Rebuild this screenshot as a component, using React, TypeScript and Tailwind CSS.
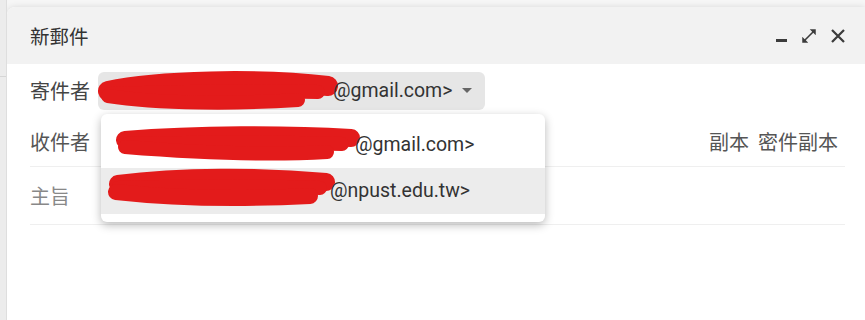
import React from 'react'

const CJK = '"Noto Sans CJK TC", "Noto Sans", sans-serif'
const LATIN = 'Roboto, "Noto Sans CJK TC", sans-serif'

// red brush-stroke used to hide the names
function Scribble({ w, h, strokes }: { w: number; h: number; strokes: { d: string; sw: number }[] }) {
  return (
    <svg width={w} height={h} viewBox={`0 0 ${w} ${h}`} className="shrink-0 overflow-visible">
      {strokes.map((s, i) => (
        <path key={i} d={s.d} stroke="#e31b1b" strokeWidth={s.sw} strokeLinecap="round" strokeLinejoin="round" fill="none" />
      ))}
    </svg>
  )
}

function HeaderIcons() {
  return (
    <div className="flex items-center gap-[11px] text-[#3c3c3c]">
      <svg width="14" height="16" viewBox="0 0 14 16">
        <rect x="1" y="11" width="11" height="3" fill="currentColor" />
      </svg>
      <svg width="18" height="18" viewBox="0 0 24 24">
        <path d="M21 11V3h-8l3.29 3.29-10 10L3 13v8h8l-3.29-3.29 10-10z" fill="currentColor" />
      </svg>
      <svg width="18" height="18" viewBox="0 0 24 24">
        <path d="M4 4l16 16M20 4L4 20" stroke="currentColor" strokeWidth="3" />
      </svg>
    </div>
  )
}

export default function App() {
  return (
    <div className="w-[865px] h-[320px] bg-[#f6f6f6] flex overflow-hidden relative" style={{ fontFamily: CJK }}>
      {/* background app peeking on the left */}
      <div className="w-[7px] shrink-0 bg-[#ececec] border-r border-[#dedede] overflow-hidden relative">
        <div className="h-[77px] border-b border-[#d6d6d6]" />
      </div>

      {/* compose window */}
      <div className="flex-1 mt-[7px] bg-white rounded-tl-[8px] overflow-hidden shadow-[0_0_6px_rgba(0,0,0,0.12)] flex flex-col">
        <div className="h-[57px] shrink-0 bg-[#f2f2f2] pl-[23px] pr-[18px] flex items-center justify-between">
          <span className="text-[19.5px] text-[#333]">新郵件</span>
          <HeaderIcons />
        </div>

        <div className="pl-[23px] pr-[20px]">
          {/* from */}
          <div className="h-[54px] flex items-center">
            <span className="w-[68px] text-[20px] text-[#444]">寄件者</span>
            <button className="h-[38px] w-[387px] bg-[#e6e6e6] rounded-[6px] flex items-center pr-[13px] text-[19.5px] text-[#333]" style={{ fontFamily: LATIN }}>
              <Scribble
                w={235}
                h={38}
                strokes={[
                  { d: 'M10 19 C60 8 160 6 230 14', sw: 20 },
                  { d: 'M12 22 C70 20 150 18 220 20', sw: 14 },
                  { d: 'M10 24 C60 32 140 32 200 28', sw: 14 },
                ]}
              />
              <span>@gmail.com&gt;</span>
              <svg width="10" height="6" viewBox="0 0 10 6" className="ml-auto text-[#666]">
                <path d="M0 0h10L5 5z" fill="currentColor" />
              </svg>
            </button>
          </div>

          {/* to */}
          <div className="h-[49px] flex items-center justify-between border-b border-[#efefef]">
            <span className="text-[20px] text-[#555]">收件者</span>
            <span className="text-[20px] text-[#555] mr-[7px]">副本&nbsp;&nbsp;密件副本</span>
          </div>

          {/* subject */}
          <div className="h-[58px] flex items-center border-b border-[#efefef]">
            <span className="text-[20px] text-[#888]">主旨</span>
          </div>
        </div>
      </div>

      {/* sender dropdown menu */}
      <div
        className="absolute left-[101px] top-[114px] w-[444px] bg-white rounded-[6px] shadow-[0_3px_10px_rgba(0,0,0,0.28)] py-[8px] text-[19.5px] text-[#333]"
        style={{ fontFamily: LATIN }}
      >
        <div className="h-[46px] flex items-center pl-[16px]">
          <Scribble
            w={238}
            h={46}
            strokes={[
              { d: 'M8 18 C80 12 170 12 234 16', sw: 18 },
              { d: 'M10 22 C80 20 160 20 225 22', sw: 14 },
              { d: 'M8 25 C70 30 140 34 210 30', sw: 14 },
            ]}
          />
          <span>@gmail.com&gt;</span>
        </div>
        <div className="h-[46px] flex items-center pl-[9px] bg-[#ececec]">
          <Scribble
            w={220}
            h={46}
            strokes={[
              { d: 'M8 16 C70 8 150 8 216 14', sw: 18 },
              { d: 'M8 20 C70 18 150 18 210 20', sw: 14 },
              { d: 'M6 24 C60 30 120 32 200 28', sw: 16 },
            ]}
          />
          <span>@npust.edu.tw&gt;</span>
        </div>
      </div>
    </div>
  )
}
